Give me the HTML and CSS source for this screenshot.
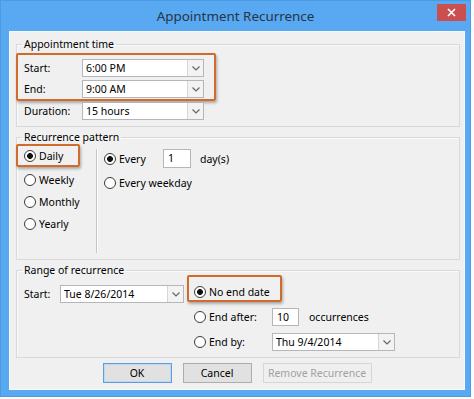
FILE: index.html
```html
<!DOCTYPE html>
<html lang="en">
<head>
  <meta charset="UTF-8">
  <title>Appointment Recurrence</title>
  <link rel="stylesheet" href="styles.css">
</head>
<body>

<div class="window">
  <div class="titlebar">
    <span class="title">Appointment Recurrence</span>
    <button class="close-btn" aria-label="Close">
      <svg width="9" height="9" viewBox="0 0 9 9"><path d="M1 1 L8 8 M8 1 L1 8" stroke="#fff" stroke-width="1.6"/></svg>
    </button>
  </div>

  <div class="client">

    <!-- Appointment time -->
    <fieldset class="group group-time">
      <legend>Appointment time</legend>
      <div class="hl hl-time">
        <div class="field-row">
          <span class="field-label">Start:</span>
          <div class="combo"><span class="combo-text">6:00 PM</span><span class="combo-drop"><svg width="8" height="5" viewBox="0 0 8 5"><path d="M0.5 0.5 L4 4 L7.5 0.5" fill="none" stroke="#666" stroke-width="1.2"/></svg></span></div>
        </div>
        <div class="field-row">
          <span class="field-label">End:</span>
          <div class="combo"><span class="combo-text">9:00 AM</span><span class="combo-drop"><svg width="8" height="5" viewBox="0 0 8 5"><path d="M0.5 0.5 L4 4 L7.5 0.5" fill="none" stroke="#666" stroke-width="1.2"/></svg></span></div>
        </div>
      </div>
      <div class="field-row duration-row">
        <span class="field-label">Duration:</span>
        <div class="combo"><span class="combo-text">15 hours</span><span class="combo-drop"><svg width="8" height="5" viewBox="0 0 8 5"><path d="M0.5 0.5 L4 4 L7.5 0.5" fill="none" stroke="#666" stroke-width="1.2"/></svg></span></div>
      </div>
    </fieldset>

    <!-- Recurrence pattern -->
    <fieldset class="group group-pattern">
      <legend>Recurrence pattern</legend>
      <div class="pattern-body">
        <div class="pattern-types">
          <label class="hl hl-daily"><input type="radio" class="radio" name="kind" checked>Daily</label>
          <label class="radio-row"><input type="radio" class="radio" name="kind">Weekly</label>
          <label class="radio-row"><input type="radio" class="radio" name="kind">Monthly</label>
          <label class="radio-row"><input type="radio" class="radio" name="kind">Yearly</label>
        </div>
        <div class="pattern-options">
          <div class="every-row">
            <label class="every-label"><input type="radio" class="radio" name="daily" checked>Every</label>
            <span class="text-input days-input">1</span>
            <span class="unit">day(s)</span>
          </div>
          <label class="weekday-row"><input type="radio" class="radio" name="daily">Every weekday</label>
        </div>
      </div>
    </fieldset>

    <!-- Range of recurrence -->
    <fieldset class="group group-range">
      <legend>Range of recurrence</legend>
      <div class="range-body">
        <div class="range-start">
          <span class="start-label">Start:</span>
          <div class="combo combo-start"><span class="combo-text">Tue 8/26/2014</span><span class="combo-drop"><svg width="8" height="5" viewBox="0 0 8 5"><path d="M0.5 0.5 L4 4 L7.5 0.5" fill="none" stroke="#666" stroke-width="1.2"/></svg></span></div>
        </div>
        <div class="range-end">
          <label class="hl hl-noend"><input type="radio" class="radio" name="end" checked>No end date</label>
          <div class="end-row end-after">
            <label class="end-label"><input type="radio" class="radio" name="end">End after:</label>
            <span class="text-input count-input">10</span>
            <span class="unit unit-occ">occurrences</span>
          </div>
          <div class="end-row end-by">
            <label class="end-label"><input type="radio" class="radio" name="end">End by:</label>
            <div class="combo combo-endby"><span class="combo-text">Thu 9/4/2014</span><span class="combo-drop"><svg width="8" height="5" viewBox="0 0 8 5"><path d="M0.5 0.5 L4 4 L7.5 0.5" fill="none" stroke="#666" stroke-width="1.2"/></svg></span></div>
          </div>
        </div>
      </div>
    </fieldset>

    <div class="buttons">
      <button class="btn btn-default">OK</button>
      <button class="btn">Cancel</button>
      <button class="btn btn-wide" disabled>Remove Recurrence</button>
    </div>

  </div>
</div>

</body>
</html>
```

FILE: styles.css
```css
html, body {
  margin: 0;
  background: #fbfbfb;
  font-family: 'Noto Sans', 'Open Sans', Arial, sans-serif;
  font-size: 10.5px;
  color: #000;
}

.window {
  position: relative;
  width: 471px;
  height: 397px;
  box-sizing: border-box;
  background: #58a8f2;
  border: 1px solid #4a9ae4;
  display: flex;
  flex-direction: column;
}

.titlebar {
  height: 30px;
  flex: none;
  display: flex;
  align-items: center;
  justify-content: center;
}

.title {
  font-size: 13.4px;
  color: #263545;
}

.close-btn {
  position: absolute;
  top: 3px;
  right: 4px;
  width: 29px;
  height: 17px;
  padding: 0;
  border: none;
  background: #c9504f;
  display: flex;
  align-items: center;
  justify-content: center;
}

.client {
  flex: 1;
  margin: 0 5px 6px 8px;
  background: #f0f0f0;
  border: 1px solid #f8fafc;
}

/* group boxes */
.group {
  margin: 2px 4px 0 6px;
  padding: 0 8px 6px 7px;
  border: 1px solid #d9d9d9;
  box-shadow: inset 1px 1px 0 #fafafa;
  min-width: 0;
}

.group legend {
  padding: 0 2px;
  margin-left: -2px;
  line-height: 16px;
}

.group-time {
  margin-top: 4px;
}

.hl {
  border: 2px solid #d06b2b;
  border-radius: 2px;
  box-shadow: 1px 2px 3px rgba(0, 0, 0, 0.3);
  box-sizing: border-box;
}

.hl-time {
  width: fit-content;
  margin: 1px 0 0 -8px;
  padding: 4px 10px 1px 6px;
}

.field-row {
  display: flex;
  align-items: center;
  height: 18px;
}

.hl-time .field-row + .field-row {
  margin-top: 3px;
}

.duration-row {
  margin-top: 1px;
}

.field-label {
  width: 58px;
}

.combo {
  width: 122px;
  height: 18px;
  box-sizing: border-box;
  border: 1px solid #b4b6bc;
  background: #fff;
  display: flex;
}

.combo-text {
  flex: 1;
  padding-left: 3px;
  line-height: 16px;
  white-space: nowrap;
}

.combo-drop {
  width: 15px;
  border-left: 1px solid #d6d6d6;
  background: #f3f3f3;
  display: flex;
  align-items: center;
  justify-content: center;
}

/* radios */
.radio {
  appearance: none;
  -webkit-appearance: none;
  flex: none;
  width: 12px;
  height: 12px;
  margin: 0 3px 0 0;
  box-sizing: border-box;
  border: 1px solid #3a3a3a;
  border-radius: 50%;
  background: #fff;
}

.radio:checked {
  background: radial-gradient(circle, #111 0 2.6px, #fff 3.2px);
}

/* recurrence pattern */
.pattern-body {
  display: flex;
  align-items: flex-start;
  margin-top: -1px;
}

.pattern-types {
  width: 72px;
}

.hl-daily {
  display: flex;
  align-items: center;
  width: 64px;
  height: 23px;
  margin-left: -8px;
  padding-left: 6px;
}

.radio-row {
  display: flex;
  align-items: center;
  height: 22px;
}

.hl-daily + .radio-row {
  margin-top: 2px;
}

.pattern-options {
  margin-top: 5px;
  height: 104px;
  box-sizing: border-box;
  border-left: 1px solid #c6c6c6;
  box-shadow: 1px 0 0 #fbfbfb inset;
  padding-left: 7px;
}

.every-row {
  display: flex;
  align-items: center;
  height: 19px;
}

.every-label {
  display: flex;
  align-items: center;
  width: 59px;
}

.text-input {
  box-sizing: border-box;
  border: 1px solid #b4b6bc;
  background: #fff;
  padding-left: 4px;
  line-height: 16px;
}

.days-input {
  width: 28px;
  height: 19px;
  line-height: 17px;
}

.unit {
  margin-left: 9px;
}

.weekday-row {
  display: flex;
  align-items: center;
  height: 18px;
  margin-top: 6px;
}

/* range of recurrence */
.range-body {
  display: flex;
  align-items: flex-start;
}

.range-start {
  display: flex;
  align-items: center;
  margin-top: 7px;
}

.start-label {
  width: 36px;
}

.combo-start {
  width: 124px;
}

.range-end {
  margin-left: 3px;
}

.hl-noend {
  display: flex;
  align-items: center;
  width: 95px;
  height: 27px;
  margin-top: -3px;
  padding: 6px 0 0 5px;
}

.end-row {
  display: flex;
  align-items: center;
  height: 18px;
  padding-left: 7px;
}

.end-after {
  margin-top: 6px;
}

.end-by {
  margin-top: 7px;
}

.end-label {
  display: flex;
  align-items: center;
  width: 78px;
}

.count-input {
  width: 27px;
  height: 18px;
}

.unit-occ {
  margin-left: 10px;
}

.combo-endby {
  width: 123px;
}

/* bottom buttons */
.buttons {
  display: flex;
  justify-content: center;
  gap: 11px;
  margin-top: 5px;
}

.btn {
  width: 69px;
  height: 20px;
  padding: 0;
  font-family: inherit;
  font-size: 10.5px;
  color: #000;
  background: #e1e1e1;
  border: 1px solid #adadad;
}

.btn-default {
  border-color: #5c9ee0;
  box-shadow: inset 0 0 0 1px #bcd8f3;
}

.btn-wide {
  width: 109px;
  color: #a2a2a2;
  background: #efefef;
  border-color: #d6d6d6;
}
```
